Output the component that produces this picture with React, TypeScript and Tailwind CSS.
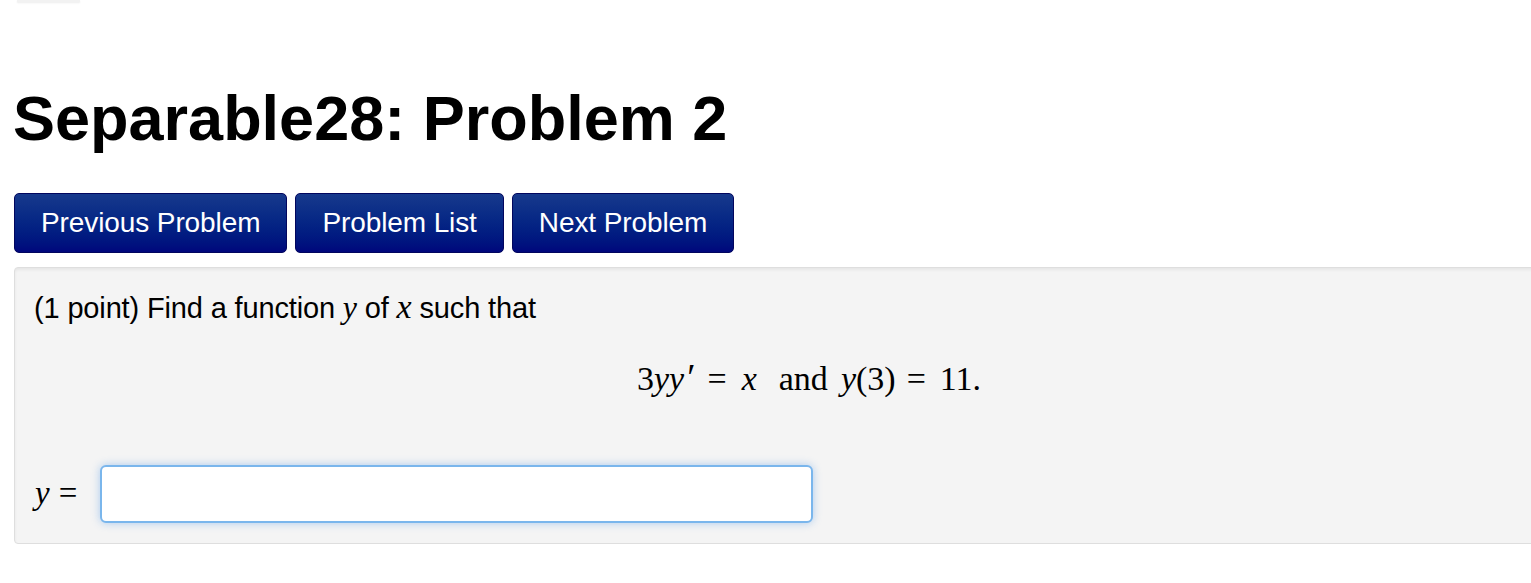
import React from "react"

const NAV = ["Previous Problem", "Problem List", "Next Problem"]

function NavButton({ label }: { label: string }) {
  return (
    <button className="h-[60px] px-[26px] rounded-[5px] border border-[#02065e] bg-gradient-to-b from-[#17398c] to-[#00067c] text-white text-[28px] leading-none font-['Liberation_Sans',Arial,sans-serif] tracking-[-0.1px]">
      {label}
    </button>
  )
}

// inline math pieces
function V({ children }: { children: React.ReactNode }) {
  return <i className="font-['Liberation_Serif','Times_New_Roman',serif]">{children}</i>
}

export default function App() {
  return (
    <main className="min-h-screen bg-white overflow-hidden font-['Liberation_Sans',Arial,sans-serif] text-black">
      <div className="ml-[17px] w-[63px] h-[2px] bg-[#f2f2f2] shadow-[0_1px_2px_rgba(0,0,0,0.08)]" />

      <h1 className="ml-[13px] mt-[76px] text-[63px] leading-[80px] font-bold">
        Separable28: Problem 2
      </h1>

      <div className="ml-[14px] mt-[35px] flex gap-[8px]">
        {NAV.map(n => (
          <NavButton key={n} label={n} />
        ))}
      </div>

      <section className="ml-[14px] mr-[-20px] mt-[14px] h-[277px] rounded-[4px] border border-[#dedede] bg-[#f4f4f4] shadow-[inset_0_2px_3px_rgba(0,0,0,0.06)] pl-[19px] pt-[22px]">
        <p className="text-[29px] leading-[34px] tracking-[-0.15px]">
          (1 point) Find a function <V><span className="text-[32px]">y</span></V> of{" "}
          <V><span className="text-[34px]">x</span></V> such that
        </p>

        <div className="mt-[34px] pl-[603px] text-[34px] leading-[36px] font-['Liberation_Serif','Times_New_Roman',serif] whitespace-nowrap">
          <span>3</span>
          <V>yy</V>
          <span className="ml-[3px] text-[38px] leading-[36px]">′</span>
          <span className="ml-[12px]">=</span>
          <V>
            <span className="ml-[15px]">x</span>
          </V>
          <span className="ml-[22px]">and</span>
          <V>
            <span className="ml-[13px]">y</span>
          </V>
          <span>(3)</span>
          <span className="ml-[11px]">=</span>
          <span className="ml-[14px]">11.</span>
        </div>

        <div className="mt-[68px] flex items-center">
          <span className="text-[33px] font-['Liberation_Serif','Times_New_Roman',serif] w-[66px] pl-[1px]">
            <V>y</V>
            <span className="ml-[9px]">=</span>
          </span>
          <input
            type="text"
            className="w-[713px] h-[58px] rounded-[6px] border-2 border-[#7ab6ec] bg-white shadow-[0_0_8px_rgba(82,150,230,0.45)] outline-none px-3 text-[26px]"
          />
        </div>
      </section>
    </main>
  )
}
